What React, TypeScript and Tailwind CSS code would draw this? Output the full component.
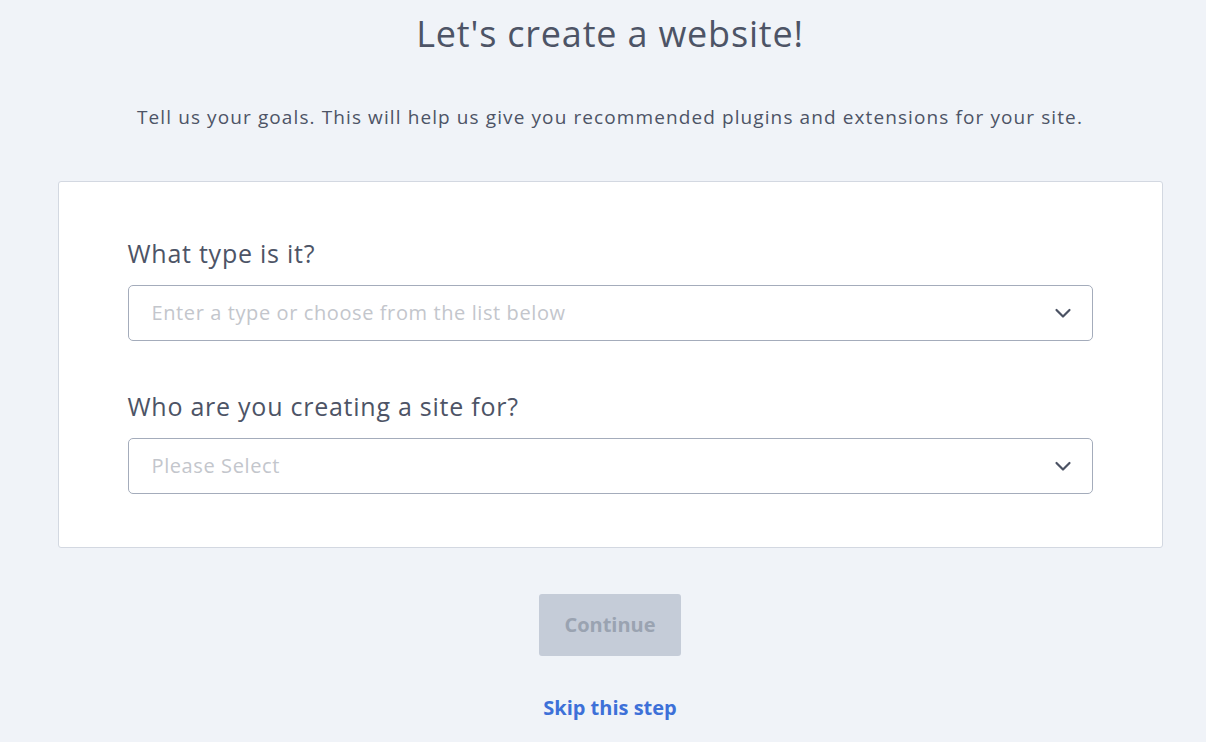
import React from "react";

const Chevron = () => (
  <svg width="20" height="20" viewBox="0 0 20 20" fill="none" className="text-[#4b5263]">
    <path d="M3.5 7l6.5 6.5L16.5 7" stroke="currentColor" strokeWidth="2.2" strokeLinecap="round" strokeLinejoin="round" />
  </svg>
);

const SelectField = ({ label, placeholder }: { label: string; placeholder: string }) => (
  <div className="flex flex-col">
    <label className="text-[25px] leading-[30px] tracking-[0.75px] text-[#4d5466]">{label}</label>
    <div className="mt-[17px] h-[56px] rounded-[5px] border border-[#a4acbb] bg-white flex items-center justify-between pl-[23px] pr-[19px]">
      <span className="text-[20px] tracking-[0.6px] text-[#c3c6cc]">{placeholder}</span>
      <Chevron />
    </div>
  </div>
);

const App = () => {
  return (
    <div className="h-[742px] bg-[#f0f3f8] pl-[14px] flex flex-col items-center" style={{ fontFamily: "'Open Sans', sans-serif" }}>
      <h1 className="mt-[12px] text-[36px] leading-[44px] tracking-[0.8px] text-[#4d5466]">Let's create a website!</h1>
      <p className="mt-[48px] text-[19px] leading-[26px] tracking-[1.1px] text-[#4d5466]">
        Tell us your goals. This will help us give you recommended plugins and extensions for your site.
      </p>
      <div className="mt-[51px] w-[1105px] h-[367px] bg-white border border-[#d3d8e1] rounded-[3px] pt-[56px] px-[69px] flex flex-col gap-[50px]">
        <SelectField label="What type is it?" placeholder="Enter a type or choose from the list below" />
        <SelectField label="Who are you creating a site for?" placeholder="Please Select" />
      </div>
      <button
        disabled
        className="mt-[46px] w-[142px] h-[62px] rounded-[3px] bg-[#c5ccd8] text-[#9aa3b1] text-[20px] font-bold"
      >
        Continue
      </button>
      <a className="mt-[38px] text-[20px] leading-[28px] font-bold text-[#3d70d8] cursor-pointer">Skip this step</a>
    </div>
  );
};

export default App;
